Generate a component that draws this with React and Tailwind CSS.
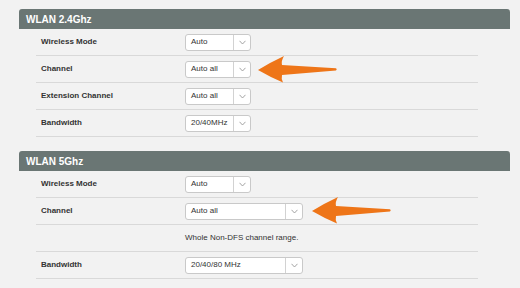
import React from 'react';

const sections = [
  {
    title: 'WLAN 2.4Ghz',
    rows: [
      { label: 'Wireless Mode', value: 'Auto', wide: false },
      { label: 'Channel', value: 'Auto all', wide: false },
      { label: 'Extension Channel', value: 'Auto all', wide: false },
      { label: 'Bandwidth', value: '20/40MHz', wide: false },
    ],
  },
  {
    title: 'WLAN 5Ghz',
    rows: [
      { label: 'Wireless Mode', value: 'Auto', wide: false },
      { label: 'Channel', value: 'Auto all', wide: true },
      { label: '', note: 'Whole Non-DFS channel range.' },
      { label: 'Bandwidth', value: '20/40/80 MHz', wide: true },
    ],
  },
];

function Select({ value, wide }) {
  return (
    <div
      className={`flex h-[17px] items-stretch rounded-[3px] border border-[#c9c9c9] bg-white ${
        wide ? 'w-[118px]' : 'w-[66px]'
      }`}
    >
      <span className="flex flex-1 items-center pl-[5px] text-[8px] text-[#333]">{value}</span>
      <span className="flex w-[17px] items-center justify-center border-l border-[#d2d2d2]">
        <svg width="7" height="5" viewBox="0 0 7 5" fill="none">
          <path d="M0.5 0.8 L3.5 4 L6.5 0.8" stroke="#9a9a9a" strokeWidth="0.9" />
        </svg>
      </span>
    </div>
  );
}

function Arrow({ className }) {
  return (
    <svg className={className} width="80" height="27" viewBox="0 0 80 27">
      <path
        d="M0 14 Q13 6 26 0 Q23 5 24 9 L78 12.3 Q79.5 13.3 78 14.5 L24 19 Q23 23 25 26.5 Q12 21 0 14 Z"
        fill="#ee7518"
      />
    </svg>
  );
}

export default function App() {
  return (
    <div className="relative h-[288px] w-[520px] overflow-hidden bg-[#f2f2f2] pl-[19px] pt-[9px] font-['Liberation_Sans',Arial,sans-serif]">
      {sections.map((section, i) => (
        <div key={section.title} className={`w-[491px] ${i > 0 ? 'mt-[14px]' : ''}`}>
          <div className="flex h-[20px] items-center rounded-t-[3px] bg-[#6a7674] pl-[7px] text-[10px] font-bold text-white">
            {section.title}
          </div>
          <div className="ml-[17px] w-[442px]">
            {section.rows.map((row, j) => (
              <div key={j} className="flex h-[27px] items-center border-b border-[#d9d9d9]">
                <span className="w-[149px] pl-[5px] text-[8px] font-bold text-[#333]">{row.label}</span>
                {row.note ? (
                  <span className="text-[8px] text-[#333]">{row.note}</span>
                ) : (
                  <Select value={row.value} wide={row.wide} />
                )}
              </div>
            ))}
          </div>
        </div>
      ))}

      <Arrow className="absolute left-[258px] top-[56px]" />
      <Arrow className="absolute left-[312px] top-[197px]" />
    </div>
  );
}
